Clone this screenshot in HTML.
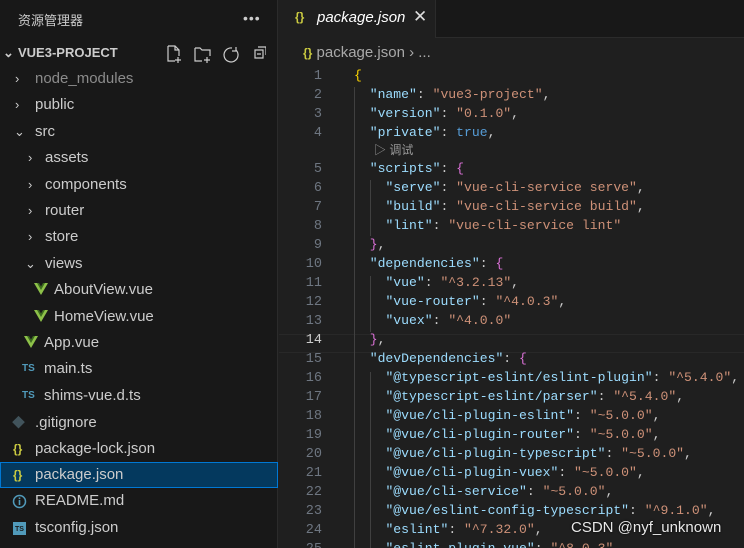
<!DOCTYPE html>
<html><head><meta charset="utf-8"><style>
*{margin:0;padding:0;box-sizing:border-box}
html{width:744px;height:548px;overflow:hidden}
body{width:744px;height:548px;overflow:hidden;background:#1f1f1f;font-family:"Liberation Sans","Noto Sans CJK SC",sans-serif;position:relative;color:#ccc}
#side{position:absolute;left:0;top:0;width:278px;height:548px;background:#181818;border-right:1px solid #2b2b2b}
.t{position:absolute;left:18px;top:10px;font-size:13px;color:#ccc}
.dots{position:absolute;left:243px;top:10px;font-size:14px;color:#ccc;letter-spacing:1px}
.row{position:absolute;left:0;width:278px;height:26px;font-size:15px;line-height:26px;color:#ccc;white-space:nowrap}
.sel{background:#04395e;outline:1px solid #0078d4;outline-offset:-1px}
.chev{position:absolute;top:0;font-size:13px;color:#ccc}
.ic{position:absolute;top:0;font-size:13px;font-weight:bold}
#tabs{position:absolute;left:279px;top:0;width:465px;height:38px;background:#181818;border-bottom:1px solid #2b2b2b}
#tab{position:absolute;left:0;top:0;width:157px;height:38px;background:#1f1f1f;border-right:1px solid #2b2b2b}
.code{position:absolute;left:279px;width:465px}
.ln{position:absolute;left:0;width:43px;text-align:right;font-size:13.5px;color:#6e7681;font-family:"Liberation Mono",monospace}
.cl{position:absolute;left:75px;font-size:13.1px;white-space:pre;font-family:"Liberation Mono",monospace;color:#ccc}
.k{color:#9cdcfe}.s{color:#ce9178}.b{color:#569cd6}.y{color:#ffd700}.p{color:#da70d6}
.guide{position:absolute;width:1px;background:#404040}
</style></head><body>
<div id="side">
<div class="t">资源管理器</div><div class="dots">•••</div>
<div class="row" style="top:40px;font-weight:bold;font-size:13px"><span class="chev" style="left:3px">&#8964;</span><span style="position:absolute;left:18px">VUE3-PROJECT</span>
<svg style="position:absolute;left:166px;top:4px" width="100" height="20" fill="none" stroke="#ccc" stroke-width="1.2">
<path d="M2 2h7l4 4v6M2 2v15h7M9 2v4h4M12 13v6M9 16h6"/>
<path d="M29 4h5l2 2h8v6M29 4v13h7M41 13v6M38 16h6"/>
<path d="M66 4a7 7 0 1 0 4 2M70 3v4h-4"/>
<path d="M89 6h8v8h-8zM92 3h8v8M91 10h4"/>
</svg></div>
<div class="row" style="top:66px"><span class="chev" style="left:15px">&#8250;</span><span style="position:absolute;left:35px;color:#8b8b8b">node_modules</span></div>
<div class="row" style="top:92px"><span class="chev" style="left:15px">&#8250;</span><span style="position:absolute;left:35px">public</span></div>
<div class="row" style="top:119px"><span class="chev" style="left:14px">&#8964;</span><span style="position:absolute;left:35px">src</span></div>
<div class="row" style="top:145px"><span class="chev" style="left:28px">&#8250;</span><span style="position:absolute;left:45px">assets</span></div>
<div class="row" style="top:172px"><span class="chev" style="left:28px">&#8250;</span><span style="position:absolute;left:45px">components</span></div>
<div class="row" style="top:198px"><span class="chev" style="left:28px">&#8250;</span><span style="position:absolute;left:45px">router</span></div>
<div class="row" style="top:224px"><span class="chev" style="left:28px">&#8250;</span><span style="position:absolute;left:45px">store</span></div>
<div class="row" style="top:251px"><span class="chev" style="left:25px">&#8964;</span><span style="position:absolute;left:45px">views</span></div>
<div class="row" style="top:277px"><svg style="position:absolute;left:34px;top:6px" width="14" height="12"><path d="M0 0h4l3 5 3-5h4l-7 12z" fill="#8dc149"/><path d="M3 0h2l2 3.5 2-3.5h2l-4 7z" fill="#3c6b1f"/></svg><span style="position:absolute;left:54px">AboutView.vue</span></div>
<div class="row" style="top:304px"><svg style="position:absolute;left:34px;top:6px" width="14" height="12"><path d="M0 0h4l3 5 3-5h4l-7 12z" fill="#8dc149"/><path d="M3 0h2l2 3.5 2-3.5h2l-4 7z" fill="#3c6b1f"/></svg><span style="position:absolute;left:54px">HomeView.vue</span></div>
<div class="row" style="top:330px"><svg style="position:absolute;left:24px;top:6px" width="14" height="12"><path d="M0 0h4l3 5 3-5h4l-7 12z" fill="#8dc149"/><path d="M3 0h2l2 3.5 2-3.5h2l-4 7z" fill="#3c6b1f"/></svg><span style="position:absolute;left:44px">App.vue</span></div>
<div class="row" style="top:356px"><span class="ic" style="left:22px;color:#519aba;font-size:10px">TS</span><span style="position:absolute;left:44px">main.ts</span></div>
<div class="row" style="top:383px"><span class="ic" style="left:22px;color:#519aba;font-size:10px">TS</span><span style="position:absolute;left:44px">shims-vue.d.ts</span></div>
<div class="row" style="top:410px"><span class="ic" style="left:12px;color:#41535b;font-size:13px">&#9670;</span><span style="position:absolute;left:35px">.gitignore</span></div>
<div class="row" style="top:436px"><span class="ic" style="left:13px;color:#cbcb41;font-size:12px">{}</span><span style="position:absolute;left:35px">package-lock.json</span></div>
<div class="row sel" style="top:462px"><span class="ic" style="left:13px;color:#cbcb41;font-size:12px">{}</span><span style="position:absolute;left:35px">package.json</span></div>
<div class="row" style="top:488px"><svg style="position:absolute;left:12px;top:6px" width="15" height="15"><circle cx="7.5" cy="7.5" r="6" fill="none" stroke="#519aba" stroke-width="1.5"/><rect x="6.7" y="6" width="1.6" height="5" fill="#519aba"/><rect x="6.7" y="3.5" width="1.6" height="1.6" fill="#519aba"/></svg><span style="position:absolute;left:35px">README.md</span></div>
<div class="row" style="top:515px"><span style="position:absolute;left:13px;top:7px;width:13px;height:13px;background:#519aba;color:#1a1a1a;font-size:7px;line-height:16px;text-align:center;font-weight:bold">TS</span><span style="position:absolute;left:35px">tsconfig.json</span></div>
</div>
<div id="tabs"><div id="tab">
<span style="position:absolute;left:16px;top:10px;color:#cbcb41;font-size:12px;font-weight:bold">{}</span>
<span style="position:absolute;left:38px;top:9px;font-size:15px;font-style:italic;color:#fff">package.json</span>
<span style="position:absolute;left:134px;top:7px;font-size:17px;color:#ddd">✕</span>
</div></div>
<div style="position:absolute;left:303px;top:44px;font-size:15px;color:#a9a9a9;white-space:nowrap"><span style="color:#cbcb41;font-size:12px;font-weight:bold">{}</span> package.json › ...</div>
<div style="position:absolute;left:279px;top:334px;width:465px;height:19px;border-top:1px solid #282828;border-bottom:1px solid #282828"></div>
<div class="guide" style="left:354px;top:87px;height:461px"></div>
<div class="guide" style="left:370px;top:180px;height:56px"></div>
<div class="guide" style="left:370px;top:276px;height:56px"></div>
<div class="guide" style="left:370px;top:372px;height:176px"></div>
<div class="code" style="top:67px">
<div class="ln" style="top:2px">1</div><div class="cl" style="top:1px"><span class="y">{</span></div>
<div class="ln" style="top:21px">2</div><div class="cl" style="top:20px">  <span class="k">"name"</span>: <span class="s">"vue3-project"</span>,</div>
<div class="ln" style="top:40px">3</div><div class="cl" style="top:39px">  <span class="k">"version"</span>: <span class="s">"0.1.0"</span>,</div>
<div class="ln" style="top:59px">4</div><div class="cl" style="top:58px">  <span class="k">"private"</span>: <span class="b">true</span>,</div>
<div style="position:absolute;left:95px;top:74px;font-size:12px;color:#999">▷ 调试</div>
</div>
<div class="code" style="top:160px">
<div class="ln" style="top:2px">5</div><div class="cl" style="top:1px">  <span class="k">"scripts"</span>: <span class="p">{</span></div>
<div class="ln" style="top:21px">6</div><div class="cl" style="top:20px">    <span class="k">"serve"</span>: <span class="s">"vue-cli-service serve"</span>,</div>
<div class="ln" style="top:40px">7</div><div class="cl" style="top:39px">    <span class="k">"build"</span>: <span class="s">"vue-cli-service build"</span>,</div>
<div class="ln" style="top:59px">8</div><div class="cl" style="top:58px">    <span class="k">"lint"</span>: <span class="s">"vue-cli-service lint"</span></div>
<div class="ln" style="top:78px">9</div><div class="cl" style="top:77px">  <span class="p">}</span>,</div>
<div class="ln" style="top:97px">10</div><div class="cl" style="top:96px">  <span class="k">"dependencies"</span>: <span class="p">{</span></div>
<div class="ln" style="top:116px">11</div><div class="cl" style="top:115px">    <span class="k">"vue"</span>: <span class="s">"^3.2.13"</span>,</div>
<div class="ln" style="top:135px">12</div><div class="cl" style="top:134px">    <span class="k">"vue-router"</span>: <span class="s">"^4.0.3"</span>,</div>
<div class="ln" style="top:154px">13</div><div class="cl" style="top:153px">    <span class="k">"vuex"</span>: <span class="s">"^4.0.0"</span></div>
<div class="ln" style="top:173px;color:#ccc">14</div><div class="cl" style="top:172px">  <span class="p">}</span>,</div>
<div class="ln" style="top:192px">15</div><div class="cl" style="top:191px">  <span class="k">"devDependencies"</span>: <span class="p">{</span></div>
<div class="ln" style="top:211px">16</div><div class="cl" style="top:210px">    <span class="k">"@typescript-eslint/eslint-plugin"</span>: <span class="s">"^5.4.0"</span>,</div>
<div class="ln" style="top:230px">17</div><div class="cl" style="top:229px">    <span class="k">"@typescript-eslint/parser"</span>: <span class="s">"^5.4.0"</span>,</div>
<div class="ln" style="top:249px">18</div><div class="cl" style="top:248px">    <span class="k">"@vue/cli-plugin-eslint"</span>: <span class="s">"~5.0.0"</span>,</div>
<div class="ln" style="top:268px">19</div><div class="cl" style="top:267px">    <span class="k">"@vue/cli-plugin-router"</span>: <span class="s">"~5.0.0"</span>,</div>
<div class="ln" style="top:287px">20</div><div class="cl" style="top:286px">    <span class="k">"@vue/cli-plugin-typescript"</span>: <span class="s">"~5.0.0"</span>,</div>
<div class="ln" style="top:306px">21</div><div class="cl" style="top:305px">    <span class="k">"@vue/cli-plugin-vuex"</span>: <span class="s">"~5.0.0"</span>,</div>
<div class="ln" style="top:325px">22</div><div class="cl" style="top:324px">    <span class="k">"@vue/cli-service"</span>: <span class="s">"~5.0.0"</span>,</div>
<div class="ln" style="top:344px">23</div><div class="cl" style="top:343px">    <span class="k">"@vue/eslint-config-typescript"</span>: <span class="s">"^9.1.0"</span>,</div>
<div class="ln" style="top:363px">24</div><div class="cl" style="top:362px">    <span class="k">"eslint"</span>: <span class="s">"^7.32.0"</span>,</div>
<div class="ln" style="top:382px">25</div><div class="cl" style="top:381px">    <span class="k">"eslint-plugin-vue"</span>: <span class="s">"^8.0.3"</span>,</div>
</div>
<div style="position:absolute;left:571px;top:519px;font-size:15px;color:#e8e8e8;text-shadow:0 0 2px #000">CSDN @nyf_unknown</div>
</body></html>
